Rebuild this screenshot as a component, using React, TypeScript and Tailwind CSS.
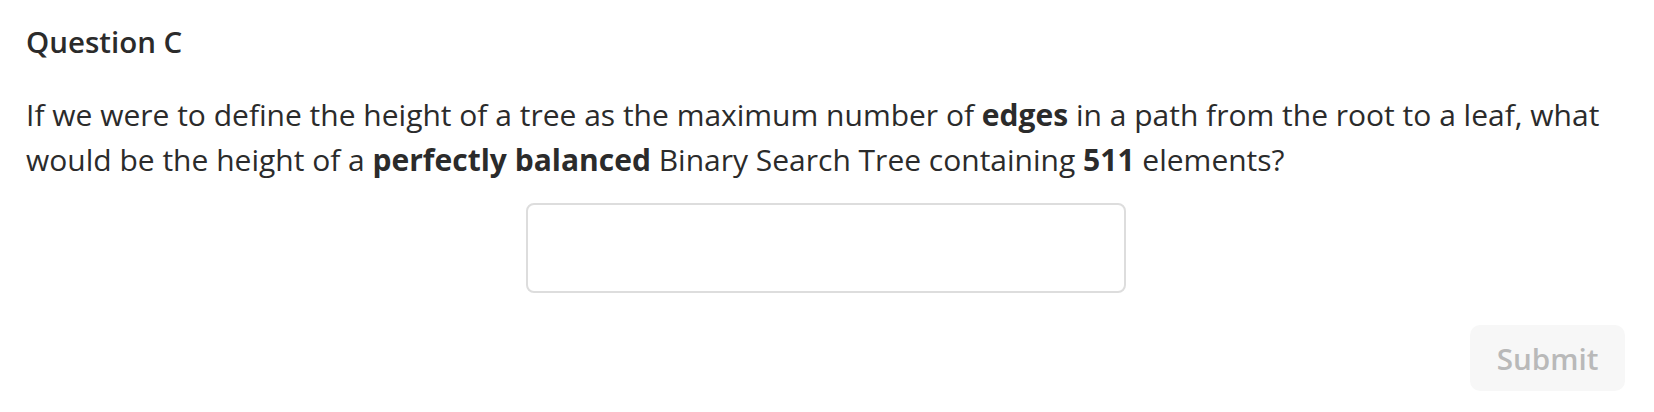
import React from "react";

export default function App() {
  return (
    <div
      className="w-full h-[412px] bg-white pl-[26px] pr-[29px] text-[#2b2b2b]"
      style={{ fontFamily: '"Open Sans", "Noto Sans", sans-serif' }}
    >
      <h2 className="pt-[22px] text-[29.5px] leading-[40px] font-semibold">Question C</h2>
      <p className="mt-[30px] text-[30px] leading-[45px]">
        If we were to define the height of a tree as the maximum number of{" "}
        <strong className="font-bold">edges</strong> in a path from the root to a leaf, what
        <br />
        would be the height of a <strong className="font-bold">perfectly balanced</strong> Binary
        Search Tree containing <strong className="font-bold">511</strong> elements?
      </p>
      <div className="mt-[21px] flex justify-center">
        <input
          type="text"
          className="w-[600px] h-[90px] rounded-[8px] border-2 border-[#dddddd] bg-white px-4 text-[30px] outline-none"
        />
      </div>
      <div className="mt-[32px] flex justify-end">
        <button
          disabled
          className="w-[155px] h-[66px] rounded-[10px] bg-[#f7f7f7] text-[#b9b9b9] text-[29.6px] leading-[45px] font-semibold"
        >
          Submit
        </button>
      </div>
    </div>
  );
}
